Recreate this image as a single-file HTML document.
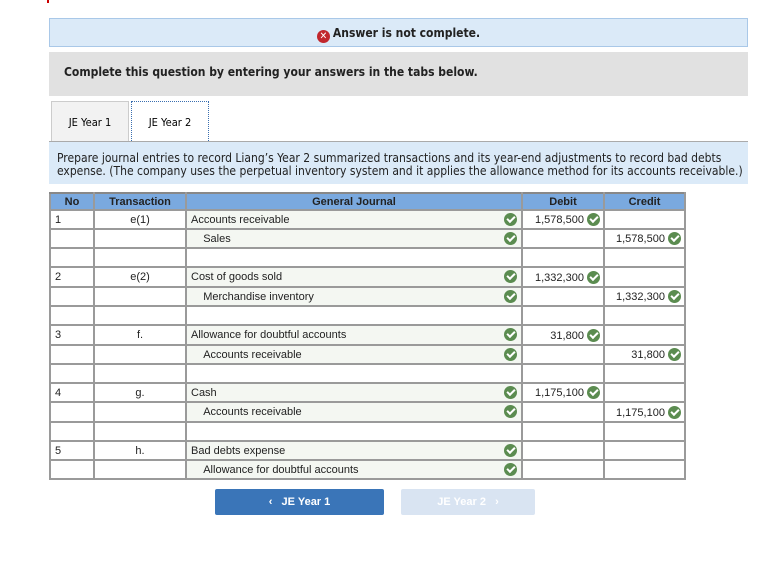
<!DOCTYPE html>
<html><head><style>
body{margin:0;width:784px;height:580px;background:#fff;font-family:"Liberation Sans",Arial,sans-serif;position:relative;overflow:hidden}
.a{position:absolute}
.top{left:49px;top:18px;width:697px;height:27px;background:#dbeaf8;border:1px solid #a9c8e8;text-align:center;font:bold 12px "DejaVu Sans Condensed","DejaVu Sans",sans-serif;line-height:28px;color:#222}
.x{display:inline-block;width:13px;height:13px;border-radius:50%;background:#c1272d;color:#fff;font-size:10px;line-height:13px;vertical-align:-2px;margin-right:3px}
.grey{left:49px;top:52px;width:699px;height:44px;background:#e1e1e1;font:bold 12px "DejaVu Sans Condensed","DejaVu Sans",sans-serif;line-height:40px;padding-left:15px;box-sizing:border-box;color:#222}
.tab{top:101px;height:40px;font:11px "DejaVu Sans Condensed","DejaVu Sans",sans-serif;line-height:42px;text-align:center;box-sizing:border-box}
.instr{left:49px;top:141px;width:699px;height:43px;background:#dbeaf8;border-top:1px solid #aaa;font:12px "DejaVu Sans Condensed","DejaVu Sans",sans-serif;line-height:13px;padding:10px 0 0 8px;box-sizing:border-box;color:#222;white-space:nowrap}
table{position:absolute;left:49px;top:192px;border-collapse:collapse;font-size:11px;color:#222;table-layout:fixed}
td,th{border:2px solid #9a9a9a;padding:0 4px;white-space:nowrap;overflow:hidden}
th{background:#7aa9df;font-weight:bold;height:15px;color:#222;border-top:2px solid #888}
td{border-width:1px 2px 2px 2px}
.g{background:#f4f7f2}
.c{text-align:center}
.r{text-align:right;padding-right:3px}
.k{display:inline-block;width:13px;height:13px;border-radius:50%;background:#5b8c50;vertical-align:-3px;position:relative}
.k:after{content:"";position:absolute;left:3px;top:3px;width:6px;height:3px;border-left:2px solid #fff;border-bottom:2px solid #fff;transform:rotate(-45deg)}
.gj{position:relative}
.gj .k{position:absolute;right:4px;top:2px}
.btn{top:489px;height:26px;font-weight:bold;font-size:11px;line-height:26px;text-align:center;color:#fff;border-radius:2px}
</style></head><body>
<div class="a" style="left:47px;top:0;width:2px;height:3px;background:#c00"></div>
<div class="a top"><span class="x">✕</span>Answer is not complete.</div>
<div class="a grey">Complete this question by entering your answers in the tabs below.</div>
<div class="a tab" style="left:51px;width:78px;background:#f2f2f2;border:1px solid #ccc;border-bottom:none">JE Year 1</div>
<div class="a tab" style="left:131px;width:78px;background:#fff;border:1px dotted #3a6fb0;border-bottom:none">JE Year 2</div>
<div class="a instr">Prepare journal entries to record Liang’s Year 2 summarized transactions and its year-end adjustments to record bad debts<br>expense. (The company uses the perpetual inventory system and it applies the allowance method for its accounts receivable.)</div>
<table>
<colgroup><col style="width:44px"><col style="width:92px"><col style="width:336px"><col style="width:82px"><col style="width:81px"></colgroup>
<tr><th>No</th><th>Transaction</th><th>General Journal</th><th>Debit</th><th>Credit</th></tr>
<tr style="height:19px"><td>1</td><td class="c">e(1)</td><td class="gj g">Accounts receivable<span class="k"></span></td><td class="r">1,578,500 <span class="k"></span></td><td></td></tr>
<tr style="height:19px"><td></td><td></td><td class="gj g">&nbsp;&nbsp;&nbsp;&nbsp;Sales<span class="k"></span></td><td></td><td class="r">1,578,500 <span class="k"></span></td></tr>
<tr style="height:19px"><td></td><td></td><td></td><td></td><td></td></tr>
<tr style="height:20px"><td>2</td><td class="c">e(2)</td><td class="gj g">Cost of goods sold<span class="k"></span></td><td class="r">1,332,300 <span class="k"></span></td><td></td></tr>
<tr style="height:19px"><td></td><td></td><td class="gj g">&nbsp;&nbsp;&nbsp;&nbsp;Merchandise inventory<span class="k"></span></td><td></td><td class="r">1,332,300 <span class="k"></span></td></tr>
<tr style="height:19px"><td></td><td></td><td></td><td></td><td></td></tr>
<tr style="height:20px"><td>3</td><td class="c">f.</td><td class="gj g">Allowance for doubtful accounts<span class="k"></span></td><td class="r">31,800 <span class="k"></span></td><td></td></tr>
<tr style="height:19px"><td></td><td></td><td class="gj g">&nbsp;&nbsp;&nbsp;&nbsp;Accounts receivable<span class="k"></span></td><td></td><td class="r">31,800 <span class="k"></span></td></tr>
<tr style="height:19px"><td></td><td></td><td></td><td></td><td></td></tr>
<tr style="height:19px"><td>4</td><td class="c">g.</td><td class="gj g">Cash<span class="k"></span></td><td class="r">1,175,100 <span class="k"></span></td><td></td></tr>
<tr style="height:20px"><td></td><td></td><td class="gj g">&nbsp;&nbsp;&nbsp;&nbsp;Accounts receivable<span class="k"></span></td><td></td><td class="r">1,175,100 <span class="k"></span></td></tr>
<tr style="height:19px"><td></td><td></td><td></td><td></td><td></td></tr>
<tr style="height:19px"><td>5</td><td class="c">h.</td><td class="gj g">Bad debts expense<span class="k"></span></td><td></td><td></td></tr>
<tr style="height:19px"><td></td><td></td><td class="gj g">&nbsp;&nbsp;&nbsp;&nbsp;Allowance for doubtful accounts<span class="k"></span></td><td></td><td></td></tr>
</table>
<div class="a btn" style="left:215px;width:169px;background:#3a75b8">‹&nbsp;&nbsp;&nbsp;JE Year 1</div>
<div class="a btn" style="left:401px;width:134px;background:#d9e4f2">JE Year 2&nbsp;&nbsp;&nbsp;›</div>
</body></html>
